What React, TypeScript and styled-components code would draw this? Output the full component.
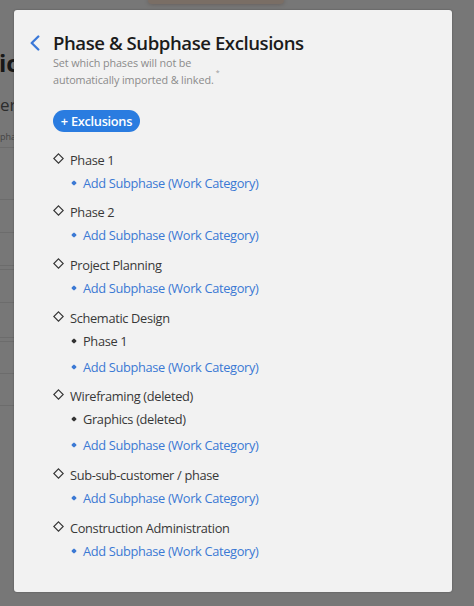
import React from "react";
import styled, { createGlobalStyle } from "styled-components";

const Global = createGlobalStyle`
  html, body { margin: 0; padding: 0; }
  body {
    width: 474px;
    height: 606px;
    overflow: hidden;
    background: #eeeeee;
    font-family: "Open Sans", "Noto Sans", sans-serif;
  }
`;

/* ---------- page behind the modal ---------- */
const Page = styled.div`
  position: relative;
  width: 474px;
  height: 606px;
  background: #eeeeee;
  overflow: hidden;
`;

const Toast = styled.div`
  width: 136px;
  height: 4px;
  margin: 0 0 0 148px;
  background: #f5dccb;
  border-radius: 0 0 4px 4px;
  box-shadow: 0 0 4px rgba(120, 80, 60, 0.4);
`;

const PageSide = styled.div`
  display: flex;
  flex-direction: column;
  width: 40px;
  padding-top: 44px;
`;

const PageTitle = styled.div`
  font-size: 24px;
  font-weight: 700;
  color: #303030;
  line-height: 30px;
  margin-left: -1px;
`;

const PageSub = styled.div`
  font-size: 17px;
  color: #5a5a5a;
  line-height: 22px;
  margin-top: 16px;
`;

const PageTiny = styled.div`
  font-size: 9px;
  color: #8a8a8a;
  line-height: 12px;
  margin-top: 15px;
  padding-bottom: 4px;
  border-bottom: 1px solid #d8d8d8;
`;

const PageRow = styled.div<{ $h: number }>`
  height: ${(p) => p.$h}px;
  border-bottom: 1px solid #d8d8d8;
`;

/* ---------- modal ---------- */
const Overlay = styled.div`
  position: absolute;
  inset: 0;
  background: rgba(0, 0, 0, 0.5);
  display: flex;
  padding: 10px 22px 14px 14px;
`;

const Card = styled.div`
  flex: 1;
  background: #f2f2f2;
  border-radius: 3px;
  box-shadow: 0 0 2px rgba(0, 0, 0, 0.35);
  padding: 22px 20px 0 16px;
  display: flex;
  flex-direction: column;
`;

const Header = styled.div`
  display: flex;
  align-items: flex-start;
`;

const Back = styled.button`
  width: 23px;
  height: 22px;
  padding: 0;
  border: 0;
  background: none;
  display: flex;
  align-items: center;
  cursor: pointer;
`;

const HeadText = styled.div`
  display: flex;
  flex-direction: column;
`;

const Title = styled.h1`
  margin: 0;
  font-size: 18.6px;
  font-weight: 600;
  color: #1b1b1b;
  line-height: 22px;
  letter-spacing: -0.45px;
`;

const Subtitle = styled.p`
  margin: 0;
  font-size: 10.8px;
  color: #8b8b8b;
  line-height: 17px;
  letter-spacing: -0.1px;
  width: 170px;
`;

const Star = styled.sup`
  font-size: 7px;
  line-height: 0;
  color: #9a9a9a;
  margin-left: 2px;
  vertical-align: 9px;
`;

const Body = styled.div`
  padding-left: 23px;
  display: flex;
  flex-direction: column;
  align-items: flex-start;
`;

const AddButton = styled.button`
  margin-top: 22px;
  height: 22px;
  width: 87px;
  padding: 0;
  border: 0;
  border-radius: 11px;
  background: #2a7ce0;
  color: #ffffff;
  font-family: "Open Sans", sans-serif;
  font-size: 12.8px;
  font-weight: 600;
  line-height: 22px;
  letter-spacing: -0.3px;
  cursor: pointer;
`;

const List = styled.div`
  margin-top: 16px;
  display: flex;
  flex-direction: column;
  gap: 6.7px;
`;

const Group = styled.div`
  display: flex;
  flex-direction: column;
`;

const PhaseRow = styled.div`
  display: flex;
  align-items: center;
  height: 23px;
  font-size: 12.8px;
  letter-spacing: -0.33px;
  color: #383838;
`;

const DiamondIcon = styled.span`
  width: 11px;
  display: flex;
  justify-content: center;
  margin-right: 6px;
  margin-top: -3px;
`;

const SubRow = styled.div<{ $link?: boolean; $spaced?: boolean }>`
  display: flex;
  align-items: center;
  height: 23px;
  margin-top: ${(p) => (p.$spaced ? 3 : 0)}px;
  padding-left: 19px;
  font-size: 12.8px;
  letter-spacing: -0.33px;
  color: ${(p) => (p.$link ? "#3b79d4" : "#383838")};
  cursor: ${(p) => (p.$link ? "pointer" : "default")};
`;

const Bullet = styled.span<{ $link?: boolean }>`
  width: 4px;
  height: 4px;
  border-radius: 1px;
  transform: rotate(45deg);
  background: ${(p) => (p.$link ? "#3b79d4" : "#333333")};
  margin-right: 7px;
`;

type Phase = { name: string; subs: string[] };

const phases: Phase[] = [
  { name: "Phase 1", subs: [] },
  { name: "Phase 2", subs: [] },
  { name: "Project Planning", subs: [] },
  { name: "Schematic Design", subs: ["Phase 1"] },
  { name: "Wireframing (deleted)", subs: ["Graphics (deleted)"] },
  { name: "Sub-sub-customer / phase", subs: [] },
  { name: "Construction Administration", subs: [] },
];

const Diamond = () => (
  <svg width="11" height="11" viewBox="0 0 11 11">
    <path d="M5.5 0.8 L10.2 5.5 L5.5 10.2 L0.8 5.5 Z" fill="none" stroke="#333" strokeWidth="1.1" />
  </svg>
);

export default function App() {
  return (
    <>
      <Global />
      <Page>
        <Toast />
        <PageSide>
          <PageTitle>ic</PageTitle>
          <PageSub>er</PageSub>
          <PageTiny>pha</PageTiny>
          <PageRow $h={51} />
          <PageRow $h={32} />
          <PageRow $h={32} />
          <PageRow $h={3} />
          <PageRow $h={32} />
          <PageRow $h={34} />
          <PageRow $h={3} />
          <PageRow $h={31} />
          <PageRow $h={31} />
        </PageSide>
        <Overlay>
          <Card>
            <Header>
              <Back aria-label="Back">
                <svg width="12" height="16" viewBox="0 0 12 16">
                  <path d="M8.3 1.5 L1.7 8 L8.3 14.5" fill="none" stroke="#3a78d8" strokeWidth="2.3" strokeLinecap="round" strokeLinejoin="round" />
                </svg>
              </Back>
              <HeadText>
                <Title>Phase &amp; Subphase Exclusions</Title>
                <Subtitle>
                  Set which phases will not be automatically imported &amp; linked.
                  <Star>*</Star>
                </Subtitle>
              </HeadText>
            </Header>
            <Body>
              <AddButton>+ Exclusions</AddButton>
              <List>
                {phases.map((p) => (
                  <Group key={p.name}>
                    <PhaseRow>
                      <DiamondIcon>
                        <Diamond />
                      </DiamondIcon>
                      {p.name}
                    </PhaseRow>
                    {p.subs.map((s) => (
                      <SubRow key={s}>
                        <Bullet />
                        {s}
                      </SubRow>
                    ))}
                    <SubRow $link $spaced={p.subs.length > 0}>
                      <Bullet $link />
                      Add Subphase (Work Category)
                    </SubRow>
                  </Group>
                ))}
              </List>
            </Body>
          </Card>
        </Overlay>
      </Page>
    </>
  );
}
